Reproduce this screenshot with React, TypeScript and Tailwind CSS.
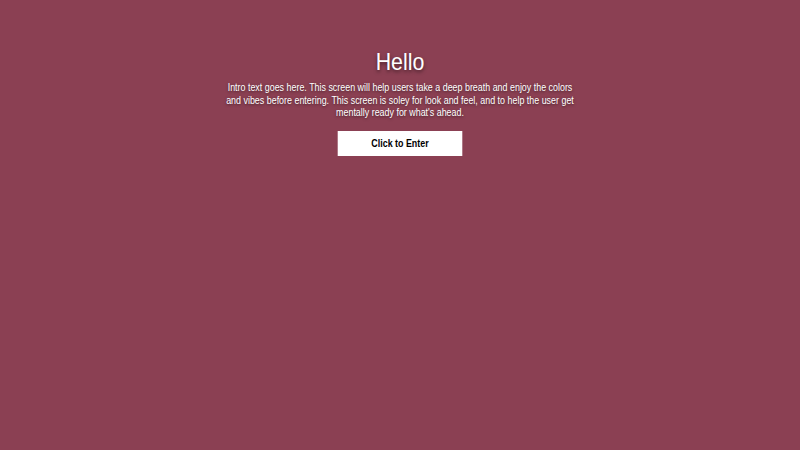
import React from "react";

export default function App() {
  return (
    <div
      className="w-full h-[450px] bg-[#8b4053] flex flex-col items-center pt-[48px] text-white"
      style={{ fontFamily: '"Liberation Sans", Arial, sans-serif' }}
    >
      <div className="flex flex-col items-center scale-x-[0.89] origin-center">
        <h1 className="text-[24px] leading-[28px] [text-shadow:0_2px_4px_rgba(0,0,0,0.5)]">
          Hello
        </h1>
        <p className="mt-[6px] w-[392px] text-center text-[10px] leading-[12.5px] [text-shadow:0_1px_3px_rgba(0,0,0,0.5)]">
          Intro text goes here. This screen will help users take a deep breath and enjoy the colors
          and vibes before entering. This screen is soley for look and feel, and to help the user get
          mentally ready for what's ahead.
        </p>
        <button className="mt-[11px] w-[140px] h-[25px] bg-white text-black text-[10px] font-bold">
          Click to Enter
        </button>
      </div>
    </div>
  );
}
